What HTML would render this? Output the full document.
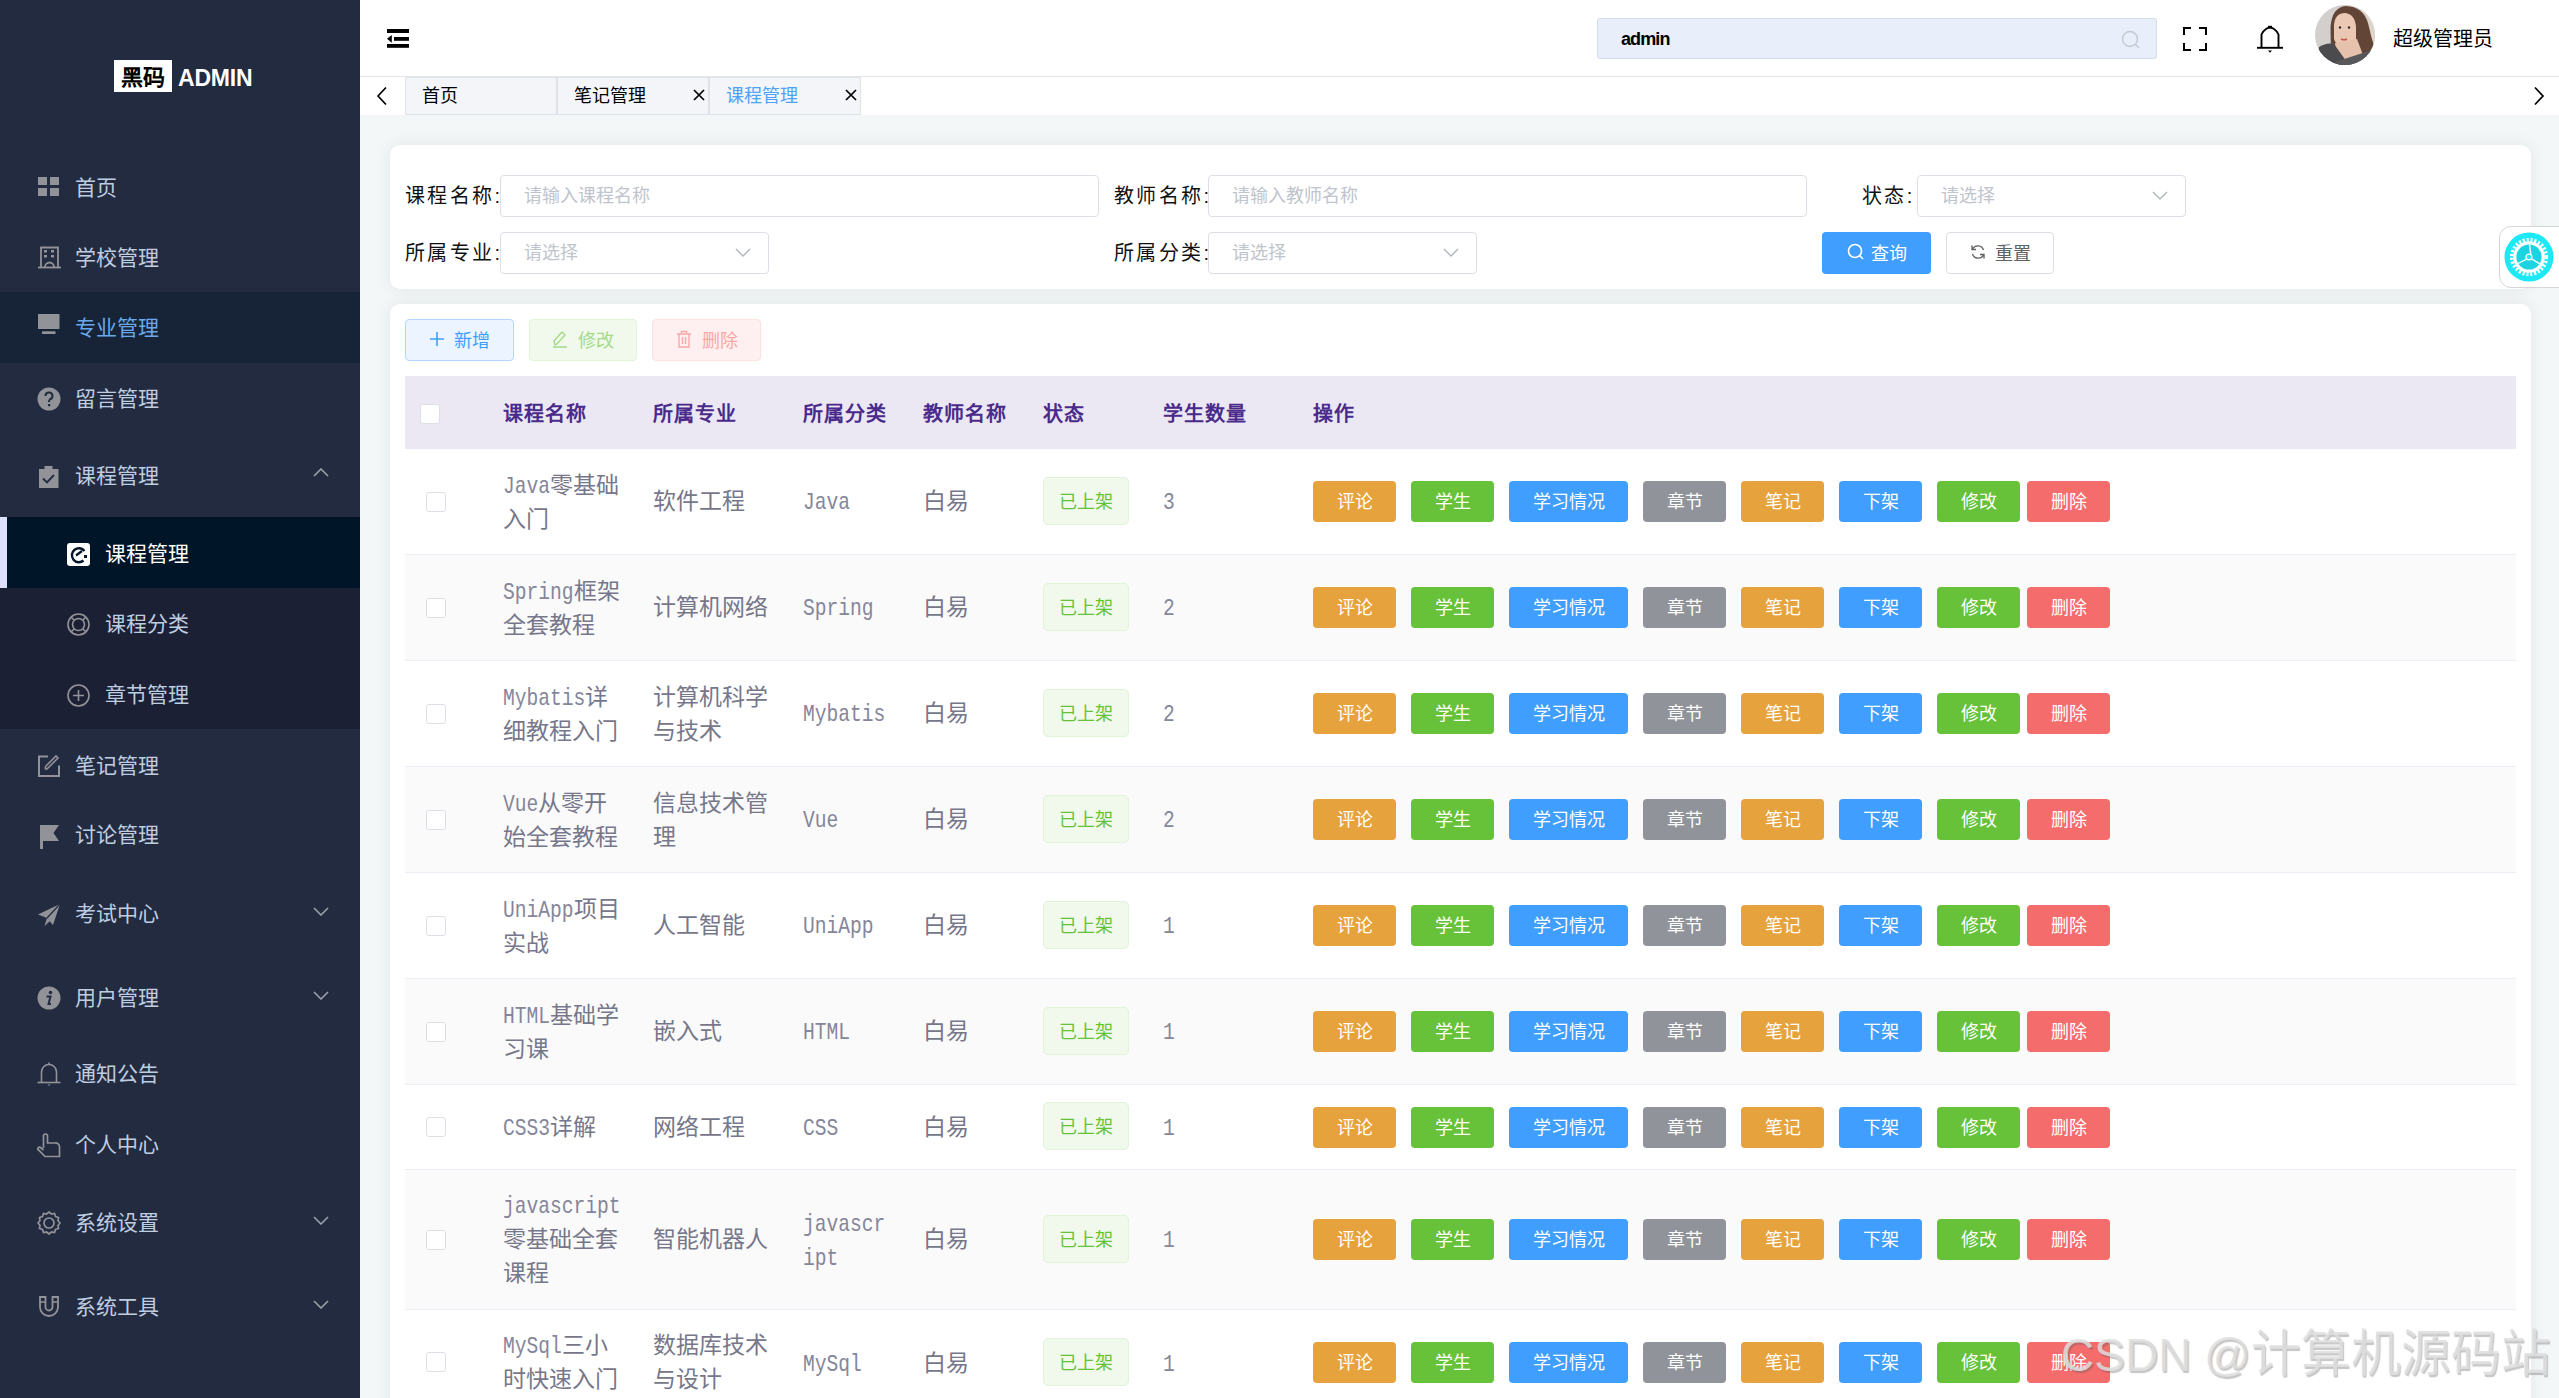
<!DOCTYPE html><html lang="zh-CN"><head><meta charset="utf-8"><style>
*{margin:0;padding:0;box-sizing:border-box}
html,body{width:2559px;height:1398px;overflow:hidden;background:#f3f7f8;font-family:"Liberation Sans",sans-serif;position:relative}
.a{position:absolute}
.fx{display:flex;align-items:center}
#side{left:0;top:0;width:360px;height:1398px;background:#232b40}
.mi{left:0;width:360px;height:40px;display:flex;align-items:center;font-size:21px;color:#bfcde0;white-space:nowrap}
.mi svg{position:absolute}
.mi .t{position:absolute;left:75px;line-height:40px}
.mi.sub .t{left:105px}
.chev{position:absolute;left:313px}
#hdr{left:360px;top:0;width:2199px;height:77px;background:#fff;border-bottom:1px solid #e4e7ea}
#tabs{left:360px;top:77px;width:2199px;height:38px;background:#fff}
.tab{top:77px;height:38px;background:#f4f5f8;border:1px solid #dfe2e6;font-size:18px;color:#000}
.tab .t{position:absolute;top:0;line-height:36px}
.card{background:#fff;border-radius:10px;box-shadow:0 0 16px rgba(40,60,70,.09)}
.lbl{font-size:20px;color:#111;line-height:42px;white-space:nowrap;letter-spacing:2.4px}
.inp{height:42px;border:1px solid #dcdfe6;border-radius:4px;background:#fff;font-size:18px;color:#c0c4cc;line-height:40px;padding-left:23px}
.btn{height:42px;border-radius:4px;font-size:18px;padding-bottom:2px;display:flex;align-items:center;justify-content:center;white-space:nowrap}
.th{top:378px;height:73px;line-height:73px;font-size:20px;letter-spacing:1px;font-weight:bold;color:#4a2b8c;white-space:nowrap}
.row{left:405px;width:2111px;border-bottom:1px solid #ebeef5}
.cb{width:20px;height:20px;border:1px solid #dcdfe6;border-radius:3px;background:#fff}
.cell{font-size:23px;font-weight:300;color:#76778a;line-height:34px;white-space:nowrap}
.l{display:inline-block;white-space:pre;line-height:20px}.l>span{display:inline-block;font-family:"Liberation Mono",monospace;font-size:24px;color:#85869a;transform:scaleX(0.816);transform-origin:0 50%}
.tag{width:86px;height:48px;background:#f0f9eb;border:1px solid #e1f3d8;border-radius:5px;color:#67c23a;font-size:18px;display:flex;align-items:center;justify-content:center;padding-bottom:3px}
.ob{height:41px;border-radius:4px;color:#fff;font-size:18px;font-weight:300;padding-bottom:3px;display:flex;align-items:center;justify-content:center;white-space:nowrap}
.o1{background:#e6a23c}.o2{background:#67c23a}.o3{background:#409eff}.o4{background:#909399}.o5{background:#f56c6c}
</style></head><body>
<div id="side" class="a">
<div class="a" style="left:0;top:292px;width:360px;height:71px;background:#172437"></div>
<div class="a" style="left:0;top:588px;width:360px;height:141px;background:#1c2034"></div>
<div class="a" style="left:0;top:517px;width:360px;height:71px;background:#011529"></div>
<div class="a" style="left:0;top:517px;width:7px;height:71px;background:#dde0fc"></div>
<div class="a" style="left:114px;top:60px;width:58px;height:32px;background:#fff;color:#000;font-size:22px;font-weight:bold;line-height:32px;padding-top:2px;text-align:center;letter-spacing:0px">黑码</div>
<div class="a" style="left:178px;top:63px;font-size:23px;font-weight:bold;color:#fff;line-height:30px;letter-spacing:-0.2px">ADMIN</div>
<div class="a mi" style="top:168px;">
<svg width="22" height="22" viewBox="0 0 22 22" style="position:absolute;left:38px;top:8px"><g fill="#929398"><rect x="0" y="1" width="9" height="8"/><rect x="12" y="1" width="9" height="8"/><rect x="0" y="12" width="9" height="8"/><rect x="12" y="12" width="9" height="8"/></g></svg>
<span class="t">首页</span>
</div>
<div class="a mi" style="top:238px;">
<svg width="23" height="23" viewBox="0 0 23 23" style="position:absolute;left:38px;top:8px"><g fill="none" stroke="#929398" stroke-width="1.8"><path d="M3 21 V1.5 H20 V21"/><path d="M0 21.5 H23"/><path d="M7 21 A4.5 4.5 0 0 1 16 21"/></g><g fill="#929398"><rect x="6" y="4" width="3" height="2.5"/><rect x="13" y="4" width="3" height="2.5"/><rect x="6" y="9" width="3" height="2.5"/><rect x="13" y="9" width="3" height="2.5"/></g></svg>
<span class="t">学校管理</span>
</div>
<div class="a mi" style="top:308px;">
<svg width="22" height="21" viewBox="0 0 22 21" style="position:absolute;left:38px;top:6px"><g fill="#929398"><rect x="0" y="0" width="21.5" height="15"/><rect x="4" y="17.3" width="13.5" height="2.7"/></g></svg>
<span class="t" style="color:#6aa8ec">专业管理</span>
</div>
<div class="a mi" style="top:379px;">
<svg width="24" height="24" viewBox="0 0 24 24" style="position:absolute;left:37px;top:8px"><circle cx="12" cy="12" r="11.5" fill="#929398"/><path d="M8.5 9 A3.5 3.5 0 1 1 13 12.3 Q12 13 12 15" stroke="#232b40" stroke-width="2" fill="none"/><rect x="11" y="17" width="2.2" height="2.2" fill="#232b40"/></svg>
<span class="t">留言管理</span>
</div>
<div class="a mi" style="top:456px;">
<svg width="20" height="23" viewBox="0 0 20 23" style="position:absolute;left:39px;top:10px"><rect x="0" y="3" width="19.5" height="19" fill="#929398"/><rect x="5.5" y="0" width="8" height="3.6" fill="#929398"/><path d="M4 12.5 L8 16.5 L15 9" stroke="#232b40" stroke-width="1.9" fill="none"/></svg>
<span class="t">课程管理</span>
<svg width="16" height="9" viewBox="0 0 16 9" style="position:absolute;left:313px;top:12px"><path d="M1 8 L8 1 L15 8" stroke="#9aa0aa" stroke-width="1.6" fill="none"/></svg>
</div>
<div class="a mi sub" style="top:534px;">
<svg width="23" height="23" viewBox="0 0 23 23" style="position:absolute;left:67px;top:9px"><rect x="0" y="0" width="23" height="23" rx="3" fill="#fff"/><path d="M17.5 8 A7 7 0 1 0 16.5 17.5" stroke="#011529" stroke-width="2.4" fill="none"/><path d="M9 12.5 L15 8" stroke="#011529" stroke-width="2.2"/><rect x="17" y="12" width="3" height="3" fill="#011529"/></svg>
<span class="t" style="color:#ffffff">课程管理</span>
</div>
<div class="a mi sub" style="top:604px;">
<svg width="23" height="23" viewBox="0 0 23 23" style="position:absolute;left:67px;top:9px"><g fill="none" stroke="#929398" stroke-width="1.6"><circle cx="11.5" cy="11.5" r="10.5"/><circle cx="11.5" cy="11.5" r="6"/><path d="M4 4 L7.3 7.3 M19 4 L15.7 7.3 M4 19 L7.3 15.7 M19 19 L15.7 15.7"/></g></svg>
<span class="t">课程分类</span>
</div>
<div class="a mi sub" style="top:675px;">
<svg width="23" height="23" viewBox="0 0 23 23" style="position:absolute;left:67px;top:9px"><g fill="none" stroke="#929398" stroke-width="1.6"><circle cx="11.5" cy="11.5" r="10.5"/><path d="M6 11.5 H17 M11.5 6 V17"/></g></svg>
<span class="t">章节管理</span>
</div>
<div class="a mi" style="top:746px;">
<svg width="22" height="22" viewBox="0 0 22 22" style="position:absolute;left:38px;top:9px"><g fill="none" stroke="#929398" stroke-width="2"><path d="M10 1.5 H1 V21 H21 V10.5"/><path d="M9 14 L20 3 L18 1 L7.5 11.5 L7.5 14 Z" stroke-width="1.6"/></g></svg>
<span class="t">笔记管理</span>
</div>
<div class="a mi" style="top:815px;">
<svg width="20" height="24" viewBox="0 0 20 24" style="position:absolute;left:40px;top:10px"><rect x="0" y="0" width="3" height="24" fill="#929398"/><path d="M3 0 H19 L13.5 8 L19 16 H3 Z" fill="#929398"/></svg>
<span class="t">讨论管理</span>
</div>
<div class="a mi" style="top:894px;">
<svg width="22" height="23" viewBox="0 0 22 23" style="position:absolute;left:38px;top:10px"><path d="M0 10.5 L22 0 L15 21 L9 14 Z" fill="#929398"/><path d="M9 14 L6.5 22 L12 17 Z" fill="#929398"/><path d="M9 14 L22 0" stroke="#232b40" stroke-width="1.3"/></svg>
<span class="t">考试中心</span>
<svg width="16" height="9" viewBox="0 0 16 9" style="position:absolute;left:313px;top:13px"><path d="M1 1 L8 8 L15 1" stroke="#9aa0aa" stroke-width="1.6" fill="none"/></svg>
</div>
<div class="a mi" style="top:978px;">
<svg width="24" height="24" viewBox="0 0 24 24" style="position:absolute;left:37px;top:8px"><circle cx="12" cy="12" r="11.5" fill="#929398"/><circle cx="13.5" cy="6.5" r="1.8" fill="#232b40"/><path d="M9.5 10.5 H13.5 L11.5 18 H14" stroke="#232b40" stroke-width="2" fill="none"/></svg>
<span class="t">用户管理</span>
<svg width="16" height="9" viewBox="0 0 16 9" style="position:absolute;left:313px;top:13px"><path d="M1 1 L8 8 L15 1" stroke="#9aa0aa" stroke-width="1.6" fill="none"/></svg>
</div>
<div class="a mi" style="top:1054px;">
<svg width="24" height="25" viewBox="0 0 24 25" style="position:absolute;left:37px;top:8px"><g fill="none" stroke="#929398" stroke-width="1.6"><path d="M4.5 20 V10 A7.5 7.5 0 0 1 19.5 10 V20"/><path d="M0.5 20.5 H23.5"/><path d="M12 0.5 V2.5"/></g><path d="M10.5 22.5 H13.5 L12 24 Z" fill="#929398"/></svg>
<span class="t">通知公告</span>
</div>
<div class="a mi" style="top:1125px;">
<svg width="24" height="25" viewBox="0 0 24 25" style="position:absolute;left:37px;top:8px"><path d="M6.5 15 V3 A2 2 0 0 1 10.5 3 V10 H18 A4 4 0 0 1 22.5 14 V23.5 H8 L1.5 17 A1.5 1.5 0 0 1 3.5 14.5 L6.5 17" fill="none" stroke="#929398" stroke-width="1.7"/></svg>
<span class="t">个人中心</span>
</div>
<div class="a mi" style="top:1203px;">
<svg width="24" height="24" viewBox="0 0 24 24" style="position:absolute;left:37px;top:8px"><g fill="none" stroke="#929398" stroke-width="1.7"><path d="M12 1 L14.5 3 L17.5 2.5 L18.5 5.5 L21.5 6.5 L21 9.5 L23 12 L21 14.5 L21.5 17.5 L18.5 18.5 L17.5 21.5 L14.5 21 L12 23 L9.5 21 L6.5 21.5 L5.5 18.5 L2.5 17.5 L3 14.5 L1 12 L3 9.5 L2.5 6.5 L5.5 5.5 L6.5 2.5 L9.5 3 Z"/><circle cx="12" cy="12" r="5"/></g></svg>
<span class="t">系统设置</span>
<svg width="16" height="9" viewBox="0 0 16 9" style="position:absolute;left:313px;top:13px"><path d="M1 1 L8 8 L15 1" stroke="#9aa0aa" stroke-width="1.6" fill="none"/></svg>
</div>
<div class="a mi" style="top:1287px;">
<svg width="22" height="22" viewBox="0 0 22 22" style="position:absolute;left:38px;top:9px"><path d="M2 1 V11 A9 9 0 0 0 20 11 V1 H14.5 V11 A3.5 3.5 0 0 1 7.5 11 V1 Z" fill="none" stroke="#929398" stroke-width="1.8"/><path d="M2 6 H7.5 M14.5 6 H20" stroke="#929398" stroke-width="1.6"/></svg>
<span class="t">系统工具</span>
<svg width="16" height="9" viewBox="0 0 16 9" style="position:absolute;left:313px;top:13px"><path d="M1 1 L8 8 L15 1" stroke="#9aa0aa" stroke-width="1.6" fill="none"/></svg>
</div>
</div>
<div id="hdr" class="a"></div>
<svg width="22" height="19" viewBox="0 0 22 19" style="position:absolute;left:387px;top:29px"><g fill="#000"><rect x="0" y="0" width="22" height="4"/><rect x="7" y="8" width="15" height="3.8"/><rect x="0" y="15" width="22" height="3.8"/><path d="M0 9.7 L4.8 6 V13.8 Z"/></g></svg>
<div class="a" style="left:1597px;top:18px;width:560px;height:41px;background:#e8effb;border:1px solid #d5dce6;border-radius:3px"></div>
<div class="a" style="left:1621px;top:19px;line-height:41px;font-size:18px;font-weight:bold;letter-spacing:-0.9px;color:#000">admin</div>
<svg width="20" height="20" viewBox="0 0 20 20" style="position:absolute;left:2121px;top:30px"><circle cx="9" cy="9" r="7.5" fill="none" stroke="#c4c8cf" stroke-width="1.4"/><path d="M14.5 14.5 L18 18" stroke="#c4c8cf" stroke-width="1.4"/></svg>
<svg width="24" height="24" viewBox="0 0 24 24" style="position:absolute;left:2183px;top:27px"><g fill="none" stroke="#000" stroke-width="2"><path d="M1 8 V1 H8 M16 1 H23 V8 M23 16 V23 H16 M8 23 H1 V16"/></g></svg>
<svg width="26" height="28" viewBox="0 0 26 28" style="position:absolute;left:2257px;top:25px"><g fill="none" stroke="#000" stroke-width="1.9"><path d="M4.5 23 V9.5 Q6 6 9 4 Q11 2.5 13 2.5 Q15 2.5 17 4 Q20 6 21.5 9.5 V23"/><path d="M0 22.8 H26"/></g><rect x="11" y="0.8" width="4" height="2.6" fill="#000"/><path d="M11 25.6 H15 L13 27.8 Z" fill="#000"/></svg>
<svg width="60" height="60" viewBox="0 0 60 60" style="position:absolute;left:2315px;top:5px"><defs><clipPath id="av"><circle cx="30" cy="30" r="30"/></clipPath></defs><g clip-path="url(#av)"><rect width="60" height="60" fill="#d3cfcd"/><rect x="44" width="16" height="60" fill="#ddd4ca"/><path d="M16 52 L15.5 22 Q17 2 31 1 Q48 1.5 53 18 Q56 32 60 44 L60 60 L16 60 Z" fill="#634538"/><path d="M19 20 Q20 8 30 8 Q40 9 41 22 L41 36 Q38 42 30 42 Q21 41 19 34 Z" fill="#eac8b4"/><path d="M20 38 L42 34 L48 50 L22 58 Z" fill="#e6c1ac"/><circle cx="25" cy="22.5" r="1.2" fill="#3a2a25"/><circle cx="34" cy="22.5" r="1.2" fill="#3a2a25"/><path d="M26 34 Q29 35.5 32 34" stroke="#c8574e" stroke-width="1.6" fill="none"/><path d="M4 42 Q12 37 19 39 L34 60 L0 60 Z" fill="#4b4b4d"/><path d="M20 57 L60 44 L60 60 L20 60 Z" fill="#58585a"/></g></svg>
<div class="a" style="left:2393px;top:19px;line-height:40px;font-size:20px;color:#000">超级管理员</div>
<div id="tabs" class="a"></div>
<svg width="12" height="20" viewBox="0 0 12 20" style="position:absolute;left:376px;top:86px"><path d="M10 1.5 L2 10 L10 18.5" stroke="#000" stroke-width="1.7" fill="none"/></svg>
<svg width="12" height="20" viewBox="0 0 12 20" style="position:absolute;left:2533px;top:86px"><path d="M2 1.5 L10 10 L2 18.5" stroke="#000" stroke-width="1.7" fill="none"/></svg>
<div class="a tab" style="left:405px;width:152px"><span class="t" style="left:16px">首页</span></div>
<div class="a tab" style="left:557px;width:152px"><span class="t" style="left:16px">笔记管理</span></div>
<svg width="12" height="12" viewBox="0 0 12 12" style="position:absolute;left:693px;top:89px"><path d="M1 1 L11 11 M11 1 L1 11" stroke="#000" stroke-width="1.7"/></svg>
<div class="a tab" style="left:709px;width:152px"><span class="t" style="left:16px;color:#4ea2f7">课程管理</span></div>
<svg width="12" height="12" viewBox="0 0 12 12" style="position:absolute;left:845px;top:89px"><path d="M1 1 L11 11 M11 1 L1 11" stroke="#000" stroke-width="1.7"/></svg>
<div class="a card" style="left:390px;top:145px;width:2141px;height:144px"></div>
<div class="a lbl" style="left:405px;top:175px">课程名称:</div>
<div class="a inp" style="left:500px;top:175px;width:599px">请输入课程名称</div>
<div class="a lbl" style="left:1114px;top:175px">教师名称:</div>
<div class="a inp" style="left:1208px;top:175px;width:599px">请输入教师名称</div>
<div class="a lbl" style="left:1862px;top:175px">状态:</div>
<div class="a inp" style="left:1917px;top:175px;width:269px">请选择</div>
<svg width="16" height="10" viewBox="0 0 16 10" style="position:absolute;left:2152px;top:191px"><path d="M1 1 L8 8 L15 1" stroke="#b4b8bf" stroke-width="1.5" fill="none"/></svg>
<div class="a lbl" style="left:405px;top:232px">所属专业:</div>
<div class="a inp" style="left:500px;top:232px;width:269px">请选择</div>
<svg width="16" height="10" viewBox="0 0 16 10" style="position:absolute;left:735px;top:248px"><path d="M1 1 L8 8 L15 1" stroke="#b4b8bf" stroke-width="1.5" fill="none"/></svg>
<div class="a lbl" style="left:1114px;top:232px">所属分类:</div>
<div class="a inp" style="left:1208px;top:232px;width:269px">请选择</div>
<svg width="16" height="10" viewBox="0 0 16 10" style="position:absolute;left:1443px;top:248px"><path d="M1 1 L8 8 L15 1" stroke="#b4b8bf" stroke-width="1.5" fill="none"/></svg>
<div class="a btn" style="left:1822px;top:232px;width:109px;background:#409eff;color:#fff"><svg width="18" height="18" viewBox="0 0 18 18" style="margin-right:6px"><circle cx="8" cy="8" r="6.5" fill="none" stroke="#fff" stroke-width="1.6"/><path d="M12.5 12.5 L16 16" stroke="#fff" stroke-width="1.6"/></svg>查询</div>
<div class="a btn" style="left:1946px;top:232px;width:108px;background:#fff;border:1px solid #dcdfe6;color:#606266"><svg width="16" height="16" viewBox="0 0 16 16" style="margin-right:9px"><path d="M13.5 6 A6 6 0 0 0 2.5 5 M2.5 10 A6 6 0 0 0 13.5 11" stroke="#606266" stroke-width="1.4" fill="none"/><path d="M2 1.5 V5.5 H6" stroke="#606266" stroke-width="1.4" fill="none"/><path d="M14 14.5 V10.5 H10" stroke="#606266" stroke-width="1.4" fill="none"/></svg>重置</div>
<div class="a" style="left:2499px;top:226px;width:80px;height:62px;background:#fff;border:1px solid #d6d6d6;border-radius:12px"></div>
<svg width="50" height="50" viewBox="0 0 50 50" style="position:absolute;left:2504px;top:232px"><circle cx="25" cy="25" r="24.5" fill="#1de9f6"/><g transform="translate(25 25)"><circle r="17.3" fill="none" stroke="#fff" stroke-width="3.6" stroke-dasharray="2.1 1.83"/><circle r="15.8" fill="#fff"/><circle r="12.6" fill="#1ad4e2"/><path d="M0.5 -12.5 L1.8 -2.5 M-11 6.5 L-2 1.8 M11 6.8 L1.8 1.5" stroke="#fff" stroke-width="1.4"/><circle r="3.6" fill="#fff"/><circle r="2.3" fill="#1de9f6"/></g></svg>
<div class="a card" style="left:390px;top:304px;width:2141px;height:1200px"></div>
<div class="a btn" style="left:405px;top:319px;width:109px;background:#ecf5ff;border:1px solid #b3d8ff;color:#409eff"><svg width="16" height="16" viewBox="0 0 16 16" style="margin-right:9px"><path d="M8 1 V15 M1 8 H15" stroke="#409eff" stroke-width="1.6"/></svg>新增</div>
<div class="a btn" style="left:529px;top:319px;width:108px;background:#f0f9eb;border:1px solid #e1f3d8;color:#a4da89"><svg width="16" height="18" viewBox="0 0 16 18" style="margin-right:10px"><path d="M3 15 L2 11 L10 2 L13 5 L5 14 Z M1 17 H15" stroke="#a4da89" stroke-width="1.4" fill="none"/></svg>修改</div>
<div class="a btn" style="left:652px;top:319px;width:109px;background:#fef0f0;border:1px solid #fde2e2;color:#f9a7a7"><svg width="16" height="18" viewBox="0 0 16 18" style="margin-right:10px"><path d="M1 4 H15 M5.5 4 V1.5 H10.5 V4 M3 4 V17 H13 V4 M6.5 7 V14 M9.5 7 V14" stroke="#f9a7a7" stroke-width="1.4" fill="none"/></svg>删除</div>
<div class="a" style="left:405px;top:376px;width:2111px;height:73px;background:#ebe8f3"></div>
<div class="a cb" style="left:420px;top:404px"></div>
<div class="a th" style="left:503px">课程名称</div>
<div class="a th" style="left:653px">所属专业</div>
<div class="a th" style="left:803px">所属分类</div>
<div class="a th" style="left:923px">教师名称</div>
<div class="a th" style="left:1043px">状态</div>
<div class="a th" style="left:1163px">学生数量</div>
<div class="a th" style="left:1313px">操作</div>
<div class="a row" style="top:449px;height:106px;background:#fff"></div>
<div class="a cb" style="left:426px;top:492px"></div>
<div class="a cell" style="left:503px;top:468px"><span class="l" style="width:47.0px"><span>Java</span></span>零基础<br>入门</div>
<div class="a cell" style="left:653px;top:484px">软件工程</div>
<div class="a cell" style="left:803px;top:484px"><span class="l" style="width:47.0px"><span>Java</span></span></div>
<div class="a cell" style="left:923px;top:484px">白易</div>
<div class="a cell" style="left:1163px;top:484px"><span class="l" style="width:11.8px"><span>3</span></span></div>
<div class="a tag" style="left:1043px;top:477px">已上架</div>
<div class="a ob o1" style="left:1313px;top:481px;width:83px">评论</div>
<div class="a ob o2" style="left:1411px;top:481px;width:83px">学生</div>
<div class="a ob o3" style="left:1509px;top:481px;width:119px">学习情况</div>
<div class="a ob o4" style="left:1643px;top:481px;width:83px">章节</div>
<div class="a ob o1" style="left:1741px;top:481px;width:83px">笔记</div>
<div class="a ob o3" style="left:1839px;top:481px;width:83px">下架</div>
<div class="a ob o2" style="left:1937px;top:481px;width:83px">修改</div>
<div class="a ob o5" style="left:2027px;top:481px;width:83px">删除</div>
<div class="a row" style="top:555px;height:106px;background:#fafafa"></div>
<div class="a cb" style="left:426px;top:598px"></div>
<div class="a cell" style="left:503px;top:574px"><span class="l" style="width:70.5px"><span>Spring</span></span>框架<br>全套教程</div>
<div class="a cell" style="left:653px;top:590px">计算机网络</div>
<div class="a cell" style="left:803px;top:590px"><span class="l" style="width:70.5px"><span>Spring</span></span></div>
<div class="a cell" style="left:923px;top:590px">白易</div>
<div class="a cell" style="left:1163px;top:590px"><span class="l" style="width:11.8px"><span>2</span></span></div>
<div class="a tag" style="left:1043px;top:583px">已上架</div>
<div class="a ob o1" style="left:1313px;top:587px;width:83px">评论</div>
<div class="a ob o2" style="left:1411px;top:587px;width:83px">学生</div>
<div class="a ob o3" style="left:1509px;top:587px;width:119px">学习情况</div>
<div class="a ob o4" style="left:1643px;top:587px;width:83px">章节</div>
<div class="a ob o1" style="left:1741px;top:587px;width:83px">笔记</div>
<div class="a ob o3" style="left:1839px;top:587px;width:83px">下架</div>
<div class="a ob o2" style="left:1937px;top:587px;width:83px">修改</div>
<div class="a ob o5" style="left:2027px;top:587px;width:83px">删除</div>
<div class="a row" style="top:661px;height:106px;background:#fff"></div>
<div class="a cb" style="left:426px;top:704px"></div>
<div class="a cell" style="left:503px;top:680px"><span class="l" style="width:82.2px"><span>Mybatis</span></span>详<br>细教程入门</div>
<div class="a cell" style="left:653px;top:680px">计算机科学<br>与技术</div>
<div class="a cell" style="left:803px;top:696px"><span class="l" style="width:82.2px"><span>Mybatis</span></span></div>
<div class="a cell" style="left:923px;top:696px">白易</div>
<div class="a cell" style="left:1163px;top:696px"><span class="l" style="width:11.8px"><span>2</span></span></div>
<div class="a tag" style="left:1043px;top:689px">已上架</div>
<div class="a ob o1" style="left:1313px;top:693px;width:83px">评论</div>
<div class="a ob o2" style="left:1411px;top:693px;width:83px">学生</div>
<div class="a ob o3" style="left:1509px;top:693px;width:119px">学习情况</div>
<div class="a ob o4" style="left:1643px;top:693px;width:83px">章节</div>
<div class="a ob o1" style="left:1741px;top:693px;width:83px">笔记</div>
<div class="a ob o3" style="left:1839px;top:693px;width:83px">下架</div>
<div class="a ob o2" style="left:1937px;top:693px;width:83px">修改</div>
<div class="a ob o5" style="left:2027px;top:693px;width:83px">删除</div>
<div class="a row" style="top:767px;height:106px;background:#fafafa"></div>
<div class="a cb" style="left:426px;top:810px"></div>
<div class="a cell" style="left:503px;top:786px"><span class="l" style="width:35.2px"><span>Vue</span></span>从零开<br>始全套教程</div>
<div class="a cell" style="left:653px;top:786px">信息技术管<br>理</div>
<div class="a cell" style="left:803px;top:802px"><span class="l" style="width:35.2px"><span>Vue</span></span></div>
<div class="a cell" style="left:923px;top:802px">白易</div>
<div class="a cell" style="left:1163px;top:802px"><span class="l" style="width:11.8px"><span>2</span></span></div>
<div class="a tag" style="left:1043px;top:795px">已上架</div>
<div class="a ob o1" style="left:1313px;top:799px;width:83px">评论</div>
<div class="a ob o2" style="left:1411px;top:799px;width:83px">学生</div>
<div class="a ob o3" style="left:1509px;top:799px;width:119px">学习情况</div>
<div class="a ob o4" style="left:1643px;top:799px;width:83px">章节</div>
<div class="a ob o1" style="left:1741px;top:799px;width:83px">笔记</div>
<div class="a ob o3" style="left:1839px;top:799px;width:83px">下架</div>
<div class="a ob o2" style="left:1937px;top:799px;width:83px">修改</div>
<div class="a ob o5" style="left:2027px;top:799px;width:83px">删除</div>
<div class="a row" style="top:873px;height:106px;background:#fff"></div>
<div class="a cb" style="left:426px;top:916px"></div>
<div class="a cell" style="left:503px;top:892px"><span class="l" style="width:70.5px"><span>UniApp</span></span>项目<br>实战</div>
<div class="a cell" style="left:653px;top:908px">人工智能</div>
<div class="a cell" style="left:803px;top:908px"><span class="l" style="width:70.5px"><span>UniApp</span></span></div>
<div class="a cell" style="left:923px;top:908px">白易</div>
<div class="a cell" style="left:1163px;top:908px"><span class="l" style="width:11.8px"><span>1</span></span></div>
<div class="a tag" style="left:1043px;top:901px">已上架</div>
<div class="a ob o1" style="left:1313px;top:905px;width:83px">评论</div>
<div class="a ob o2" style="left:1411px;top:905px;width:83px">学生</div>
<div class="a ob o3" style="left:1509px;top:905px;width:119px">学习情况</div>
<div class="a ob o4" style="left:1643px;top:905px;width:83px">章节</div>
<div class="a ob o1" style="left:1741px;top:905px;width:83px">笔记</div>
<div class="a ob o3" style="left:1839px;top:905px;width:83px">下架</div>
<div class="a ob o2" style="left:1937px;top:905px;width:83px">修改</div>
<div class="a ob o5" style="left:2027px;top:905px;width:83px">删除</div>
<div class="a row" style="top:979px;height:106px;background:#fafafa"></div>
<div class="a cb" style="left:426px;top:1022px"></div>
<div class="a cell" style="left:503px;top:998px"><span class="l" style="width:47.0px"><span>HTML</span></span>基础学<br>习课</div>
<div class="a cell" style="left:653px;top:1014px">嵌入式</div>
<div class="a cell" style="left:803px;top:1014px"><span class="l" style="width:47.0px"><span>HTML</span></span></div>
<div class="a cell" style="left:923px;top:1014px">白易</div>
<div class="a cell" style="left:1163px;top:1014px"><span class="l" style="width:11.8px"><span>1</span></span></div>
<div class="a tag" style="left:1043px;top:1007px">已上架</div>
<div class="a ob o1" style="left:1313px;top:1011px;width:83px">评论</div>
<div class="a ob o2" style="left:1411px;top:1011px;width:83px">学生</div>
<div class="a ob o3" style="left:1509px;top:1011px;width:119px">学习情况</div>
<div class="a ob o4" style="left:1643px;top:1011px;width:83px">章节</div>
<div class="a ob o1" style="left:1741px;top:1011px;width:83px">笔记</div>
<div class="a ob o3" style="left:1839px;top:1011px;width:83px">下架</div>
<div class="a ob o2" style="left:1937px;top:1011px;width:83px">修改</div>
<div class="a ob o5" style="left:2027px;top:1011px;width:83px">删除</div>
<div class="a row" style="top:1085px;height:85px;background:#fff"></div>
<div class="a cb" style="left:426px;top:1117px"></div>
<div class="a cell" style="left:503px;top:1110px"><span class="l" style="width:47.0px"><span>CSS3</span></span>详解</div>
<div class="a cell" style="left:653px;top:1110px">网络工程</div>
<div class="a cell" style="left:803px;top:1110px"><span class="l" style="width:35.2px"><span>CSS</span></span></div>
<div class="a cell" style="left:923px;top:1110px">白易</div>
<div class="a cell" style="left:1163px;top:1110px"><span class="l" style="width:11.8px"><span>1</span></span></div>
<div class="a tag" style="left:1043px;top:1102px">已上架</div>
<div class="a ob o1" style="left:1313px;top:1107px;width:83px">评论</div>
<div class="a ob o2" style="left:1411px;top:1107px;width:83px">学生</div>
<div class="a ob o3" style="left:1509px;top:1107px;width:119px">学习情况</div>
<div class="a ob o4" style="left:1643px;top:1107px;width:83px">章节</div>
<div class="a ob o1" style="left:1741px;top:1107px;width:83px">笔记</div>
<div class="a ob o3" style="left:1839px;top:1107px;width:83px">下架</div>
<div class="a ob o2" style="left:1937px;top:1107px;width:83px">修改</div>
<div class="a ob o5" style="left:2027px;top:1107px;width:83px">删除</div>
<div class="a row" style="top:1170px;height:140px;background:#fafafa"></div>
<div class="a cb" style="left:426px;top:1230px"></div>
<div class="a cell" style="left:503px;top:1188px"><span class="l" style="width:117.5px"><span>javascript</span></span><br>零基础全套<br>课程</div>
<div class="a cell" style="left:653px;top:1222px">智能机器人</div>
<div class="a cell" style="left:803px;top:1206px"><span class="l" style="width:82.2px"><span>javascr</span></span><br><span class="l" style="width:35.2px"><span>ipt</span></span></div>
<div class="a cell" style="left:923px;top:1222px">白易</div>
<div class="a cell" style="left:1163px;top:1222px"><span class="l" style="width:11.8px"><span>1</span></span></div>
<div class="a tag" style="left:1043px;top:1215px">已上架</div>
<div class="a ob o1" style="left:1313px;top:1219px;width:83px">评论</div>
<div class="a ob o2" style="left:1411px;top:1219px;width:83px">学生</div>
<div class="a ob o3" style="left:1509px;top:1219px;width:119px">学习情况</div>
<div class="a ob o4" style="left:1643px;top:1219px;width:83px">章节</div>
<div class="a ob o1" style="left:1741px;top:1219px;width:83px">笔记</div>
<div class="a ob o3" style="left:1839px;top:1219px;width:83px">下架</div>
<div class="a ob o2" style="left:1937px;top:1219px;width:83px">修改</div>
<div class="a ob o5" style="left:2027px;top:1219px;width:83px">删除</div>
<div class="a row" style="top:1310px;height:106px;background:#fff"></div>
<div class="a cb" style="left:426px;top:1352px"></div>
<div class="a cell" style="left:503px;top:1328px"><span class="l" style="width:58.8px"><span>MySql</span></span>三小<br>时快速入门</div>
<div class="a cell" style="left:653px;top:1328px">数据库技术<br>与设计</div>
<div class="a cell" style="left:803px;top:1346px"><span class="l" style="width:58.8px"><span>MySql</span></span></div>
<div class="a cell" style="left:923px;top:1346px">白易</div>
<div class="a cell" style="left:1163px;top:1346px"><span class="l" style="width:11.8px"><span>1</span></span></div>
<div class="a tag" style="left:1043px;top:1338px">已上架</div>
<div class="a ob o1" style="left:1313px;top:1342px;width:83px">评论</div>
<div class="a ob o2" style="left:1411px;top:1342px;width:83px">学生</div>
<div class="a ob o3" style="left:1509px;top:1342px;width:119px">学习情况</div>
<div class="a ob o4" style="left:1643px;top:1342px;width:83px">章节</div>
<div class="a ob o1" style="left:1741px;top:1342px;width:83px">笔记</div>
<div class="a ob o3" style="left:1839px;top:1342px;width:83px">下架</div>
<div class="a ob o2" style="left:1937px;top:1342px;width:83px">修改</div>
<div class="a ob o5" style="left:2027px;top:1342px;width:83px">删除</div>
<div class="a" style="left:2061px;top:1322px;font-size:50px;color:rgba(222,222,222,.85);line-height:64px;white-space:nowrap;text-shadow:1.5px 1.5px 1px rgba(90,90,90,.35)"><span style="font-size:46px">CSDN @</span>计算机源码站</div>
</body></html>
